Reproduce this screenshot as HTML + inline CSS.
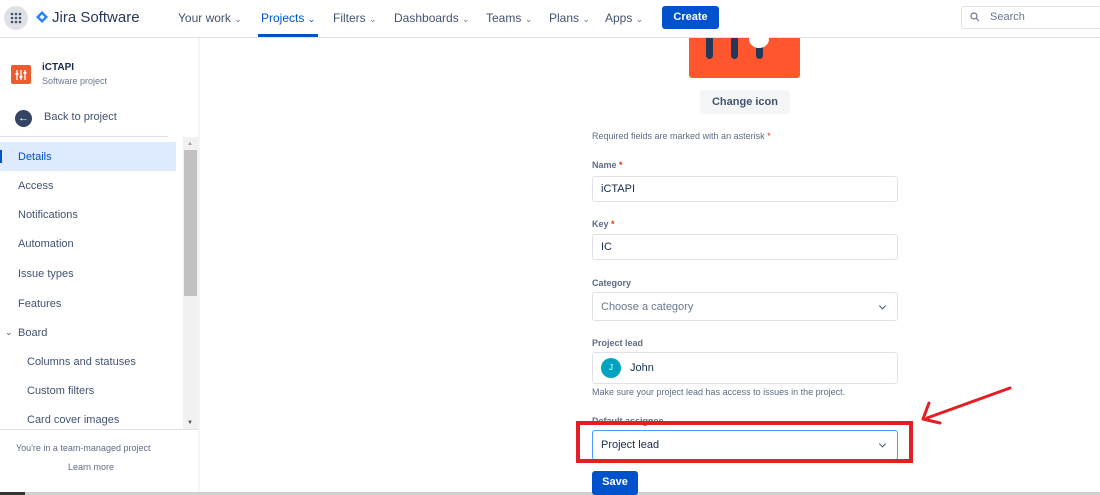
<!DOCTYPE html>
<html><head><style>
*{box-sizing:border-box;margin:0;padding:0}
body{width:1100px;height:495px;overflow:hidden;background:#fff;font-family:"Liberation Sans",sans-serif;color:#172b4d;position:relative}
.a{position:absolute;white-space:nowrap}
.nav{font-size:12px;color:#42526e}
.nav small{font-size:9px;color:#6b778c}
.side{font-size:11px;color:#42526e}
.lbl{font-size:9px;color:#5e6c84;font-weight:bold}
.inp{position:absolute;left:592px;width:306px;border:1px solid #dfe1e6;border-radius:3px;background:#fff;font-size:11px;color:#172b4d;padding-left:8px;display:flex;align-items:center}
.chev{position:absolute;right:12px;top:50%;width:5px;height:5px;border-right:1.5px solid #42526e;border-bottom:1.5px solid #42526e;transform:translateY(-70%) rotate(45deg)}
</style></head><body>
<!-- top bar -->
<div class="a" style="left:0;top:37px;width:1100px;height:1px;background:#dfe1e6"></div>
<div class="a" style="left:4px;top:6px;width:24px;height:24px;border-radius:50%;background:#dfe1e6"></div>
<svg class="a" style="left:10px;top:12px" width="12" height="12"><g fill="#42526e"><circle cx="2" cy="2" r="1.3"/><circle cx="6" cy="2" r="1.3"/><circle cx="10" cy="2" r="1.3"/><circle cx="2" cy="6" r="1.3"/><circle cx="6" cy="6" r="1.3"/><circle cx="10" cy="6" r="1.3"/><circle cx="2" cy="10" r="1.3"/><circle cx="6" cy="10" r="1.3"/><circle cx="10" cy="10" r="1.3"/></g></svg>
<svg class="a" style="left:35px;top:10px" width="14" height="14"><path d="M7 1L13 7L7 13L1 7Z" fill="#2684ff"/><path d="M7 4.5L9.5 7L7 9.5L4.5 7Z" fill="#fff"/></svg>
<div class="a" style="left:52px;top:9px;font-size:15px;color:#253858">Jira Software</div>
<div class="a nav" style="left:178px;top:11px">Your work <small>⌄</small></div>
<div class="a nav" style="left:261px;top:11px;color:#0052cc">Projects <small style="color:#0052cc">⌄</small></div>
<div class="a" style="left:258px;top:34px;width:60px;height:3px;background:#0052cc"></div>
<div class="a nav" style="left:333px;top:11px">Filters <small>⌄</small></div>
<div class="a nav" style="left:394px;top:11px">Dashboards <small>⌄</small></div>
<div class="a nav" style="left:486px;top:11px">Teams <small>⌄</small></div>
<div class="a nav" style="left:549px;top:11px">Plans <small>⌄</small></div>
<div class="a nav" style="left:605px;top:11px">Apps <small>⌄</small></div>
<div class="a" style="left:662px;top:6px;width:57px;height:23px;background:#0052cc;border-radius:3px;color:#fff;font-size:11px;font-weight:bold;text-align:center;line-height:23px">Create</div>
<div class="a" style="left:961px;top:6px;width:145px;height:23px;border:1px solid #dfe1e6;border-radius:3px;font-size:11px;color:#6b778c;padding-left:28px;line-height:21px">Search</div>
<svg class="a" style="left:970px;top:12px" width="10" height="10"><circle cx="4" cy="4" r="3" fill="none" stroke="#6b778c" stroke-width="1.2"/><path d="M6.3 6.3L9 9" stroke="#6b778c" stroke-width="1.2"/></svg>
<!-- sidebar -->
<div class="a" style="left:198px;top:38px;width:2px;height:457px;background:#f4f5f7"></div>
<div class="a" style="left:11px;top:65px;width:20px;height:19px;background:#ef5b30;border-radius:2px"></div>
<svg class="a" style="left:11px;top:65px" width="20" height="19"><g stroke="#fff" stroke-width="1.3"><path d="M6 5V15M10 5V15M14 5V15"/></g><g fill="#fff"><rect x="4.5" y="8" width="3" height="2"/><rect x="8.5" y="11" width="3" height="2"/><rect x="12.5" y="7" width="3" height="2"/></g></svg>
<div class="a" style="left:42px;top:62px;font-size:10px;font-weight:bold;color:#172b4d">iCTAPI</div>
<div class="a" style="left:42px;top:76px;font-size:9px;color:#6b778c">Software project</div>
<div class="a" style="left:15px;top:110px;width:17px;height:17px;border-radius:50%;background:#344563;color:#fff;font-size:11px;text-align:center;line-height:16px;font-weight:bold">←</div>
<div class="a side" style="left:44px;top:111px">Back to project</div>
<div class="a" style="left:0;top:136px;width:168px;height:1px;background:#dfe1e6"></div>
<div class="a" style="left:0;top:142px;width:176px;height:29px;background:#deebff"></div>
<div class="a" style="left:0;top:150px;width:2px;height:13px;background:#0052cc"></div>
<div class="a side" style="left:18px;top:151px;color:#0052cc">Details</div>
<div class="a side" style="left:18px;top:180px">Access</div>
<div class="a side" style="left:18px;top:209px">Notifications</div>
<div class="a side" style="left:18px;top:238px">Automation</div>
<div class="a side" style="left:18px;top:268px">Issue types</div>
<div class="a side" style="left:18px;top:298px">Features</div>
<div class="a side" style="left:5px;top:327px;font-size:9px">⌄</div>
<div class="a side" style="left:18px;top:327px">Board</div>
<div class="a side" style="left:27px;top:356px">Columns and statuses</div>
<div class="a side" style="left:27px;top:385px">Custom filters</div>
<div class="a side" style="left:27px;top:414px">Card cover images</div>
<div class="a" style="left:183px;top:137px;width:15px;height:292px;background:#f1f1f1"></div>
<div class="a" style="left:184px;top:150px;width:13px;height:146px;background:#c1c1c1"></div>
<div class="a" style="left:187px;top:141px;font-size:6px;color:#a0a0a0">▲</div>
<div class="a" style="left:187px;top:420px;font-size:6px;color:#505050">▼</div>
<div class="a" style="left:0;top:429px;width:198px;height:1px;background:#dfe1e6"></div>
<div class="a" style="left:16px;top:443px;font-size:9px;color:#5e6c84">You're in a team-managed project</div>
<div class="a" style="left:68px;top:462px;font-size:9px;color:#5e6c84">Learn more</div>
<div class="a" style="left:0;top:492px;width:1100px;height:3px;background:#d0d0d0"></div>
<div class="a" style="left:0;top:492px;width:25px;height:3px;background:#333"></div>
<!-- main -->
<div class="a" style="left:689px;top:38px;width:111px;height:40px;background:#ff5630;border-radius:0 0 3px 3px"></div>
<div class="a" style="left:706px;top:38px;width:7px;height:21px;background:#253858;border-radius:0 0 4px 4px"></div>
<div class="a" style="left:731px;top:38px;width:7px;height:21px;background:#253858;border-radius:0 0 4px 4px"></div>
<div class="a" style="left:756px;top:38px;width:7px;height:21px;background:#253858;border-radius:0 0 4px 4px"></div>
<div class="a" style="left:749px;top:30px;width:20px;height:18px;background:#fff;border-radius:50%"></div>
<div class="a" style="left:700px;top:90px;width:90px;height:24px;background:#f4f5f7;border-radius:3px;font-size:11px;font-weight:bold;color:#42526e;text-align:center;line-height:24px">Change icon</div>
<div class="a" style="left:592px;top:131px;font-size:9px;color:#5e6c84">Required fields are marked with an asterisk <span style="color:#de350b">*</span></div>
<div class="a lbl" style="left:592px;top:160px">Name <span style="color:#de350b">*</span></div>
<div class="inp" style="top:176px;height:26px">iCTAPI</div>
<div class="a lbl" style="left:592px;top:219px">Key <span style="color:#de350b">*</span></div>
<div class="inp" style="top:234px;height:26px">IC</div>
<div class="a lbl" style="left:592px;top:278px">Category</div>
<div class="inp" style="top:292px;height:29px;color:#6b778c">Choose a category<span class="chev"></span></div>
<div class="a lbl" style="left:592px;top:338px">Project lead</div>
<div class="inp" style="top:352px;height:32px"><span style="display:inline-block;width:20px;height:20px;border-radius:50%;background:#00a3bf;color:#fff;font-size:8px;text-align:center;line-height:20px;margin-right:9px">J</span>John</div>
<div class="a" style="left:592px;top:387px;font-size:9px;color:#5e6c84">Make sure your project lead has access to issues in the project.</div>
<div class="a lbl" style="left:592px;top:416px">Default assignee</div>
<div class="inp" style="top:430px;height:30px;border-color:#4c9aff">Project lead<span class="chev"></span></div>
<div class="a" style="left:576px;top:421px;width:337px;height:42px;border:4px solid #e31e24"></div>
<div class="a" style="left:592px;top:471px;width:46px;height:24px;background:#0052cc;border-radius:3px;color:#fff;font-size:11px;font-weight:bold;text-align:center;line-height:23px">Save</div>
<svg class="a" style="left:915px;top:380px" width="100" height="50"><path d="M95 8L12 38" stroke="#e31e24" stroke-width="3" fill="none" stroke-linecap="round"/><path d="M14 23L8 39L25 43" stroke="#e31e24" stroke-width="3" fill="none" stroke-linecap="round" stroke-linejoin="round"/></svg>
</body></html>
